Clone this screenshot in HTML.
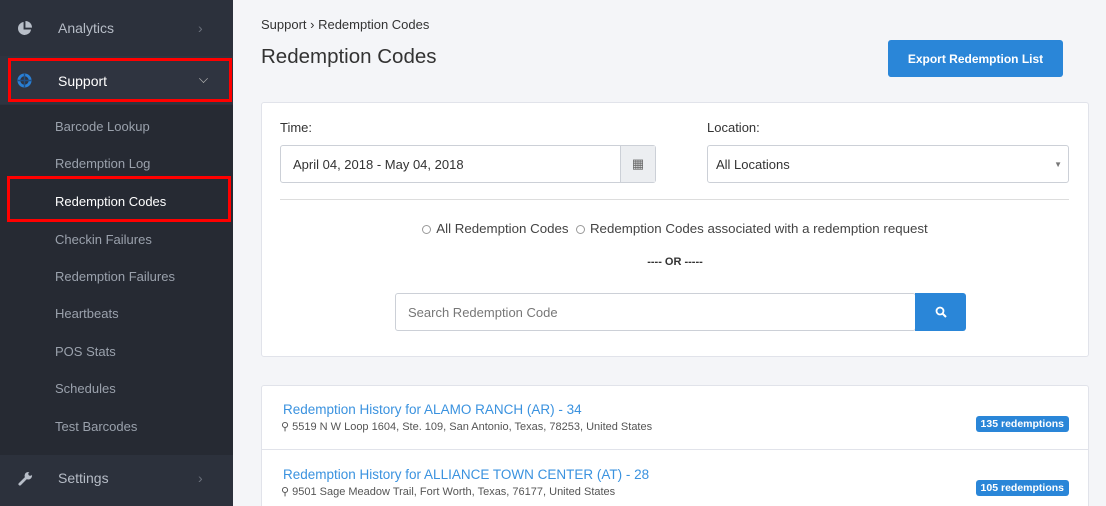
<!DOCTYPE html><html><head><style>
*{box-sizing:border-box;margin:0;padding:0}
html,body{width:1106px;height:506px;overflow:hidden}
body{font-family:"Liberation Sans",sans-serif;background:#f4f5f8;position:relative}
.sb{position:absolute;left:0;top:0;width:233px;height:506px;background:#2c313c}
.sub{position:absolute;left:0;top:105px;width:233px;height:350px;background:#262a33}
.it{position:absolute;left:58px;font-size:14px;color:#b6bcc6}
.si{position:absolute;left:55px;font-size:13px;color:#9aa1ac}
.red{position:absolute;border:3px solid #f00}
.main{position:absolute;left:233px;top:0;right:0;bottom:0;overflow:hidden}
.card{position:absolute;background:#fff;border:1px solid #e1e3ea;border-radius:3px}
.lbl{position:absolute;font-size:13px;color:#333}
.inp{position:absolute;border:1px solid #ccd0d7;border-radius:3px;background:#fff;font-size:13px;color:#333;padding-left:12px;display:flex;align-items:center}
.rad{display:inline-block;width:9px;height:9px;border:1px solid #999;border-radius:50%;vertical-align:-1px;margin-right:5px;position:relative}
.link{position:absolute;left:21px;font-size:13.5px;color:#3a92df}
.addr{position:absolute;left:19px;font-size:11px;color:#555}
.badge{position:absolute;right:19px;background:#2a86d8;color:#fff;font-size:10.5px;font-weight:bold;padding:2px 5px;border-radius:3px}
</style></head><body>
<div class="sb">
<div class="sub"></div>
<svg style="position:absolute;left:17px;top:21px" width="15" height="15" viewBox="0 0 16 16"><path d="M7 1A7 7 0 1 0 15 9H7Z" fill="#b8bec8"/><path d="M9 0V7H16A7 7 0 0 0 9 0Z" fill="#b8bec8"/></svg>
<div class="it" style="top:20px">Analytics</div>
<div style="position:absolute;left:198px;top:20px;color:#6b717c;font-size:14px">›</div>
<div style="position:absolute;left:0;top:56px;width:233px;height:48px;background:#2f3440"></div>
<div class="red" style="left:8px;top:58px;width:224px;height:44px"></div>
<svg style="position:absolute;left:17px;top:73px" width="15" height="15" viewBox="0 0 16 16"><circle cx="8" cy="8" r="6" fill="none" stroke="#2a7fd4" stroke-width="3"/><path d="M8 0V16M0 8H16" stroke="#1f4f86" stroke-width="1.5"/></svg>
<div class="it" style="top:73px;color:#fff">Support</div>
<div style="position:absolute;left:199px;top:74px;width:9px;height:9px;border-right:1.5px solid #aaa;border-bottom:1.5px solid #aaa;transform:rotate(45deg) scale(.7)"></div>
<div class="si" style="top:119px">Barcode Lookup</div>
<div class="si" style="top:156px">Redemption Log</div>
<div class="red" style="left:7px;top:176px;width:224px;height:46px"></div>
<div class="si" style="top:194px;color:#fff">Redemption Codes</div>
<div class="si" style="top:232px">Checkin Failures</div>
<div class="si" style="top:269px">Redemption Failures</div>
<div class="si" style="top:306px">Heartbeats</div>
<div class="si" style="top:344px">POS Stats</div>
<div class="si" style="top:381px">Schedules</div>
<div class="si" style="top:419px">Test Barcodes</div>
<svg style="position:absolute;left:18px;top:471px" width="15" height="15" viewBox="0 0 16 16"><path d="M2 14L9 7" stroke="#b8bec8" stroke-width="3" stroke-linecap="round"/><circle cx="11" cy="5" r="4" fill="#b8bec8"/><circle cx="13" cy="3" r="2" fill="#2c313c"/></svg>
<div class="it" style="top:470px">Settings</div>
<div style="position:absolute;left:198px;top:470px;color:#6b717c;font-size:14px">›</div>
</div>
<div class="main">
<div style="position:absolute;left:28px;top:17px;font-size:13px;color:#333">Support › Redemption Codes</div>
<div style="position:absolute;left:28px;top:45px;font-size:20.5px;color:#333">Redemption Codes</div>
<div style="position:absolute;left:655px;top:40px;width:175px;height:37px;background:#2a86d8;color:#fff;font-size:12px;font-weight:bold;display:flex;align-items:center;justify-content:center;border-radius:3px">Export Redemption List</div>
<div class="card" style="left:28px;top:102px;width:828px;height:255px">
<div class="lbl" style="left:18px;top:17px">Time:</div>
<div class="inp" style="left:18px;top:42px;width:376px;height:38px">April 04, 2018 - May 04, 2018</div>
<div style="position:absolute;left:358px;top:43px;width:35px;height:36px;background:#eceef1;border-left:1px solid #ccd0d7;color:#666;font-size:13px;display:flex;align-items:center;justify-content:center">▦</div>
<div class="lbl" style="left:445px;top:17px">Location:</div>
<div class="inp" style="left:445px;top:42px;width:362px;height:38px;padding-left:8px">All Locations<span style="position:absolute;right:6px;font-size:8px;color:#777">▼</span></div>
<div style="position:absolute;left:18px;top:96px;width:789px;height:1px;background:#ddd"></div>
<div style="position:absolute;left:0;width:100%;text-align:center;top:118px;font-size:13.3px;color:#444"><span class="rad"></span>All Redemption Codes &nbsp;<span class="rad"></span>Redemption Codes associated with a redemption request</div>
<div style="position:absolute;left:0;width:100%;text-align:center;top:153px;font-size:11px;color:#333;font-weight:bold">---- OR -----</div>
<div class="inp" style="left:133px;top:190px;width:521px;height:38px;color:#777">Search Redemption Code</div>
<div style="position:absolute;left:653px;top:190px;width:51px;height:38px;background:#2a86d8;border-radius:0 3px 3px 0"><svg style="position:absolute;left:20px;top:13px" width="12" height="12" viewBox="0 0 12 12"><circle cx="5" cy="5" r="3.5" fill="none" stroke="#fff" stroke-width="1.8"/><path d="M7.5 7.5L11 11" stroke="#fff" stroke-width="2"/></svg></div>
</div>
<div class="card" style="left:28px;top:385px;width:828px;height:130px">
<div class="link" style="top:16px">Redemption History for ALAMO RANCH (AR) - 34</div>
<div class="addr" style="top:34px">⚲ 5519 N W Loop 1604, Ste. 109, San Antonio, Texas, 78253, United States</div>
<div class="badge" style="top:30px">135 redemptions</div>
<div style="position:absolute;left:0;top:63px;width:100%;height:1px;background:#e1e3ea"></div>
<div class="link" style="top:81px">Redemption History for ALLIANCE TOWN CENTER (AT) - 28</div>
<div class="addr" style="top:99px">⚲ 9501 Sage Meadow Trail, Fort Worth, Texas, 76177, United States</div>
<div class="badge" style="top:94px">105 redemptions</div>
</div>
</div>
</body></html>
